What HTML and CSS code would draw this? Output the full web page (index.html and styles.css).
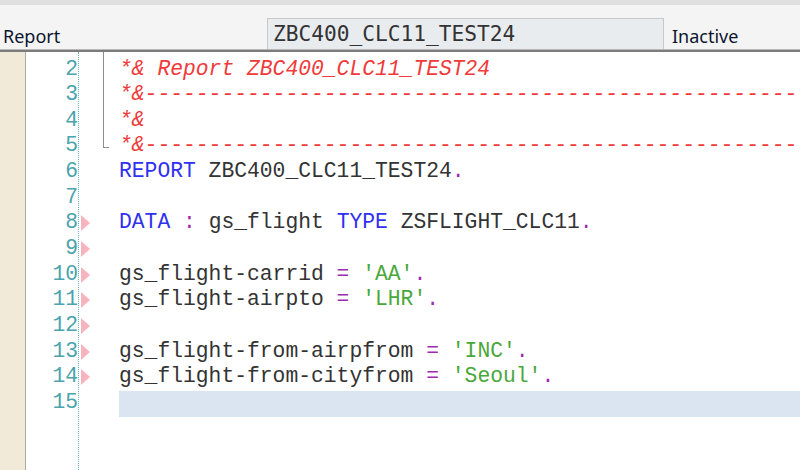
FILE: index.html
```html
<!DOCTYPE html>
<html>
  <head>
    <title>ABAP Editor</title>
    <link rel="stylesheet" href="styles.css">
  </head>
  <body>
    <div class="top-strip"></div>
    <div class="header">
      <span class="label">Report</span>
      <div class="prog-name">ZBC400_CLC11_TEST24</div>
      <span class="status">Inactive</span>
    </div>

    <div class="editor">
      <div class="side"></div>
      <div class="numbers">
        <div>2</div><div>3</div><div>4</div><div>5</div><div>6</div><div>7</div>
        <div>8</div><div>9</div><div>10</div><div>11</div><div>12</div><div>13</div>
        <div>14</div><div>15</div>
      </div>
      <div class="marks">
        <div></div><div></div><div></div><div></div><div></div><div></div>
        <div><span class="tri"></span></div>
        <div><span class="tri"></span></div>
        <div><span class="tri"></span></div>
        <div><span class="tri"></span></div>
        <div><span class="tri"></span></div>
        <div><span class="tri"></span></div>
        <div><span class="tri"></span></div>
        <div></div>
      </div>
      <div class="fold-col">
        <div class="fold"></div>
      </div>
      <div class="code">
        <div class="cm">*&amp; Report ZBC400_CLC11_TEST24</div>
        <div class="cm">*&amp;---------------------------------------------------</div>
        <div class="cm">*&amp;</div>
        <div class="cm">*&amp;---------------------------------------------------</div>
        <div><span class="kw">REPORT</span> ZBC400_CLC11_TEST24<span class="op">.</span></div>
        <div></div>
        <div><span class="kw">DATA</span> <span class="op">:</span> gs_flight <span class="kw">TYPE</span> ZSFLIGHT_CLC11<span class="op">.</span></div>
        <div></div>
        <div>gs_flight-carrid <span class="op">=</span> <span class="str">'AA'</span><span class="op">.</span></div>
        <div>gs_flight-airpto <span class="op">=</span> <span class="str">'LHR'</span><span class="op">.</span></div>
        <div></div>
        <div>gs_flight-from-airpfrom <span class="op">=</span> <span class="str">'INC'</span><span class="op">.</span></div>
        <div>gs_flight-from-cityfrom <span class="op">=</span> <span class="str">'Seoul'</span><span class="op">.</span></div>
        <div class="current"></div>
      </div>
    </div>
  </body>
</html>
```

FILE: styles.css
```css
body {
  margin: 0;
  width: 800px;
  height: 470px;
  overflow: hidden;
  background: #ffffff;
}
.top-strip {
  height: 5px;
  background: #e0e0e0;
}
.header {
  height: 44px;
  display: flex;
  align-items: flex-end;
  background: #f4f4f4;
  border-bottom: 1px solid #b8b8b8;
  font-family: "Noto Sans", sans-serif;
  font-size: 18px;
  color: #0c1630;
}
.label {
  width: 267px;
  padding-left: 3px;
  box-sizing: border-box;
  line-height: 22px;
  padding-bottom: 2px;
}
.prog-name {
  width: 397px;
  height: 31px;
  box-sizing: border-box;
  border: 1px solid #c8c8c8;
  border-bottom: none;
  background: #e9ecef;
  padding-left: 5px;
  font-family: "DejaVu Sans Mono", monospace;
  font-size: 21.2px;
  line-height: 30px;
  color: #333333;
}
.status {
  padding-left: 8px;
  line-height: 22px;
  padding-bottom: 2px;
}

.editor {
  display: flex;
  height: 418px;
  border-top: 2px solid #7c7c7c;
  font-family: "Liberation Mono", monospace;
  font-size: 21.33px;
}
.editor .numbers div,
.editor .marks div,
.editor .code div {
  height: 25.67px;
  line-height: 25.67px;
  white-space: pre;
}
.side {
  width: 25px;
  background: #f1ead9;
  border-right: 1px solid #a8a8a8;
}
.numbers {
  width: 52px;
  padding-top: 4.5px;
  text-align: right;
  color: #4aa3ad;
  border-right: 1px dotted #6fb4bc;
}
.marks {
  width: 24px;
  padding-top: 4.5px;
}
.tri {
  display: inline-block;
  margin-left: 2px;
  width: 0;
  height: 0;
  border-top: 8px solid transparent;
  border-bottom: 8px solid transparent;
  border-left: 9px solid #f8b4be;
  vertical-align: -3px;
}
.fold-col {
  width: 16px;
}
.fold {
  width: 5px;
  height: 95px;
  border-left: 1px solid #8c8c8c;
  border-bottom: 1px solid #8c8c8c;
}
.code {
  flex: 1;
  overflow: hidden;
  padding-top: 4.5px;
  color: #333333;
}
.cm {
  color: #f03a3a;
  font-style: italic;
}
.kw {
  color: #3030f0;
}
.op {
  color: #9a2cb0;
}
.str {
  color: #4aa83a;
}
.code .current {
  background: #dbe5f2;
  height: 24px;
  margin-top: 1px;
}
```
